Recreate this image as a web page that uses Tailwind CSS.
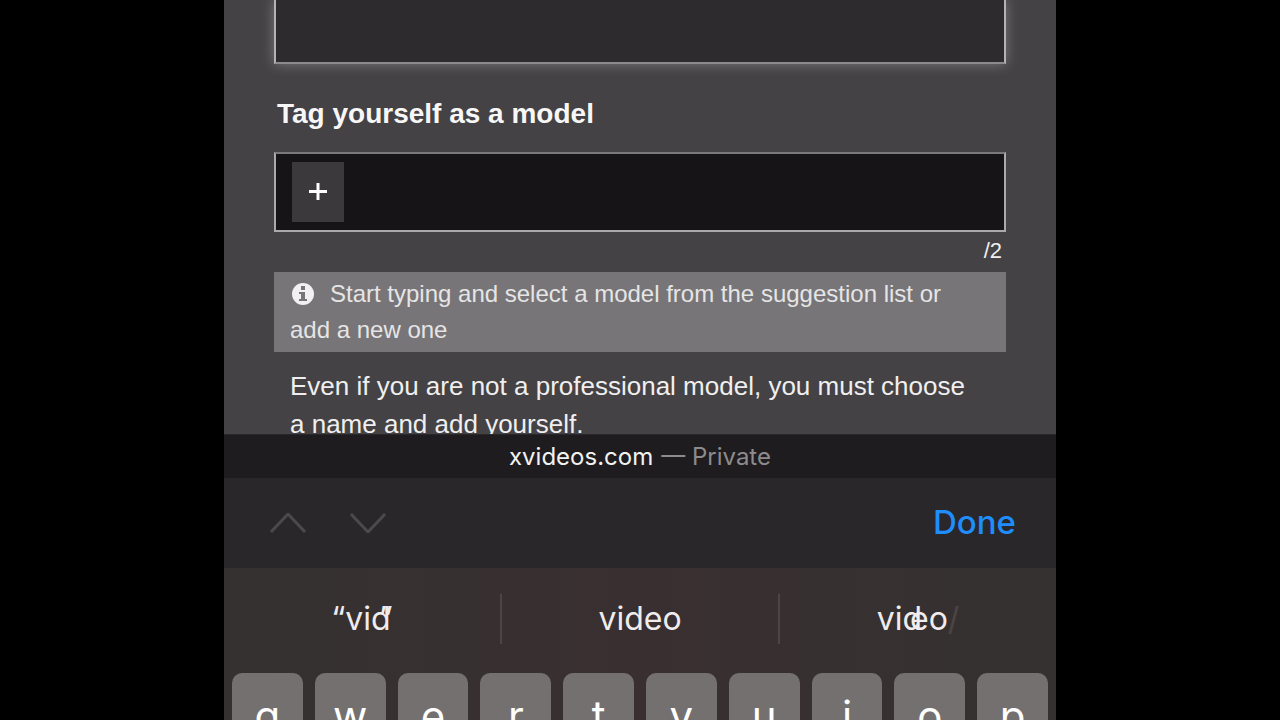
<!DOCTYPE html>
<html lang="en">
<head>
    <meta charset="UTF-8">
    <meta name="viewport" content="width=device-width, initial-scale=1.0">
    <title>Tag yourself as a model</title>
    <script src="https://cdn.jsdelivr.net/npm/@tailwindcss/browser@4"></script>
</head>
<body class="bg-black">
    <div class="w-[65%] h-screen mx-auto flex flex-col overflow-hidden bg-[#444244]">
        <!-- Form -->
        <main class="flex-1 min-h-0 overflow-hidden px-[50px] text-[#f0eff0] font-['Liberation_Sans',Arial,sans-serif]">
            <textarea aria-label="Description" class="block w-full h-16 resize-none outline-none bg-[#2e2b2e] border-2 border-t-0 border-[#b4b2b4] border-b-[#8c8a8c] shadow-[0_0_12px_rgba(255,255,255,0.3)]"></textarea>
            <label for="model" class="block mt-8 pl-[3px] text-[28px] leading-9 font-bold text-[#f8f7f8]">Tag yourself as a model</label>
            <div class="mt-5 h-20 flex items-center pl-4 bg-[#161416] border-2 border-[#aba9ab] border-t-[#7b797b]">
                <button aria-label="Add model" class="w-[52px] h-[60px] flex items-center justify-center bg-[#3b393b]">
                    <svg class="w-[18px] h-[18px]" viewBox="0 0 18 18" fill="none" stroke="#fff" stroke-width="3"><path d="M9 0v17M0 8.5h18"/></svg>
                </button>
                <input id="model" type="text" class="flex-1 h-full px-2 text-2xl bg-transparent outline-none">
            </div>
            <div class="h-10 pr-1 text-right text-[22px] leading-[38px]">/2</div>
            <p class="h-20 pl-4 pr-10 pt-1 text-[24px] leading-9 bg-[#777577] text-[#e6e5e6]">
                <svg class="inline-block w-6 h-6 mr-4 mb-1" viewBox="0 0 24 24"><circle cx="13" cy="12" r="11" fill="#f2f1f2"/><path d="M11 4h4v4h-4zM9 10h6v7h2v2H9v-2h2v-5H9z" fill="#777577"/></svg>Start typing and select a model from the suggestion list or add a new one
            </p>
            <p class="mt-[15px] pl-4 pr-8 text-[26px] leading-[38px]">Even if you are not a professional model, you must choose a name and add yourself.</p>
        </main>

        <!-- Address bar -->
        <div class="shrink-0 h-11 flex items-center justify-center gap-2 bg-[#1e1c1e] border-t border-[#29272a] text-[24px] font-[Inter,sans-serif]">
            <span class="text-[#f2f2f2]">xvideos.com</span>
            <span class="text-[#8d8b8d]">— Private</span>
        </div>

        <!-- Input toolbar -->
        <div class="shrink-0 h-[90px] flex items-center pl-[46px] pr-10 bg-[#292729]">
            <button aria-label="Previous field"><svg class="w-9 h-5" viewBox="0 0 36 20" fill="none" stroke="#4b494b" stroke-width="3"><path d="M1 19L18 1L35 19"/></svg></button>
            <button aria-label="Next field" class="ml-11"><svg class="w-9 h-5" viewBox="0 0 36 20" fill="none" stroke="#4b494b" stroke-width="3"><path d="M1 1L18 19L35 1"/></svg></button>
            <button class="ml-auto text-[33px] font-medium text-[#1f8dfb] font-[Inter,sans-serif]">Done</button>
        </div>

        <!-- Keyboard -->
        <div class="shrink-0 h-[152px] overflow-hidden bg-linear-to-r from-[#353130] from-5% via-[#392f30] to-[#353130] to-95% text-[#f0eced] font-[Inter,sans-serif]">
            <div class="h-[105px] pb-1 flex items-center text-[32px]">
                <button class="flex-1">“vid<span class="-ml-3">”</span></button>
                <div class="w-[2px] h-[50px] bg-[#4d4445]"></div>
                <button class="flex-1">video</button>
                <div class="w-[2px] h-[50px] bg-[#4d4445]"></div>
                <button class="flex-1">vid<span class="-ml-3">eo</span><span class="text-[#4d4445]">/</span></button>
            </div>
            <div class="grid grid-cols-10 gap-3 px-2 text-[42px] text-white">
                <button class="h-[84px] rounded-[10px] bg-[#747070]">q</button>
                <button class="h-[84px] rounded-[10px] bg-[#747070]">w</button>
                <button class="h-[84px] rounded-[10px] bg-[#747070]">e</button>
                <button class="h-[84px] rounded-[10px] bg-[#747070]">r</button>
                <button class="h-[84px] rounded-[10px] bg-[#747070]">t</button>
                <button class="h-[84px] rounded-[10px] bg-[#747070]">y</button>
                <button class="h-[84px] rounded-[10px] bg-[#747070]">u</button>
                <button class="h-[84px] rounded-[10px] bg-[#747070]">i</button>
                <button class="h-[84px] rounded-[10px] bg-[#747070]">o</button>
                <button class="h-[84px] rounded-[10px] bg-[#747070]">p</button>
            </div>
        </div>
    </div>
</body>
</html>
